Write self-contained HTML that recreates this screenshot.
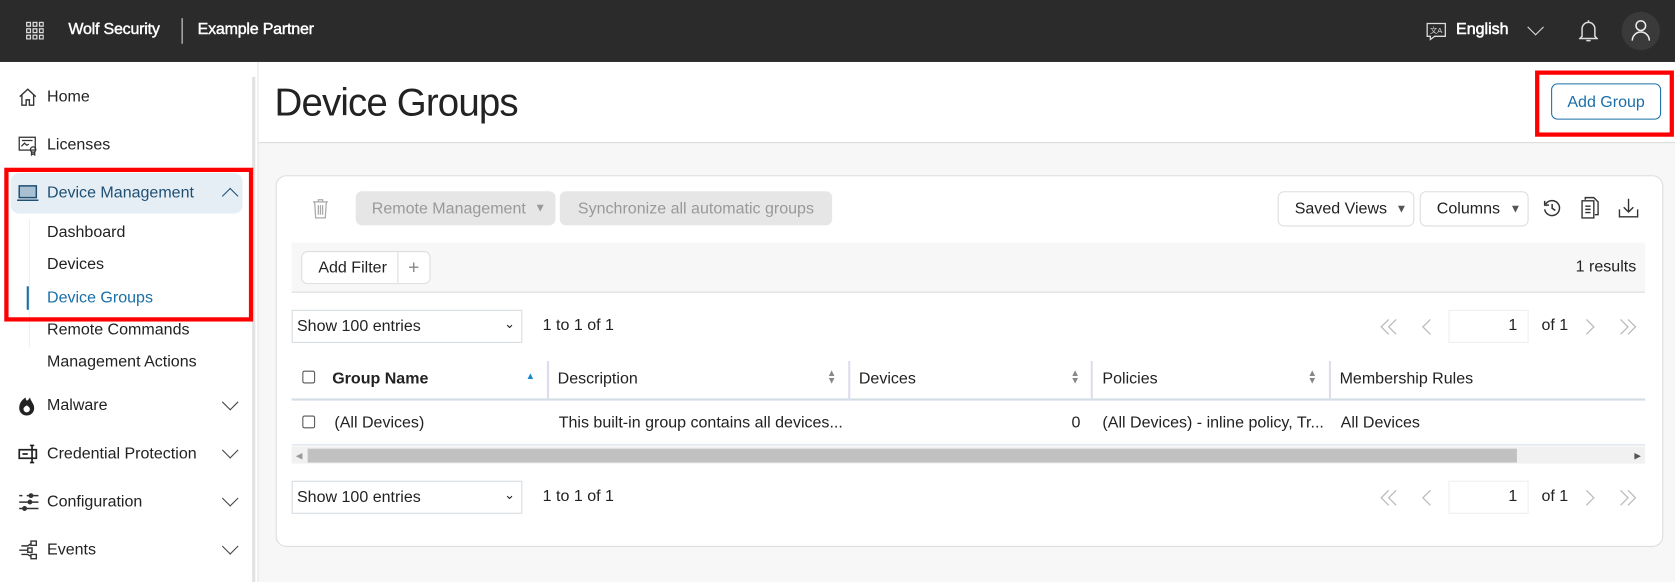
<!DOCTYPE html>
<html><head><meta charset="utf-8"><style>
*{box-sizing:border-box;margin:0;padding:0}
html,body{width:1675px;height:582px;overflow:hidden;background:#fff;font-family:"Liberation Sans",sans-serif;color:#222}
#w{position:absolute;left:0;top:0;width:1568px;height:545px;transform:scale(1.06824);transform-origin:0 0}
.a{position:absolute}
.t{position:absolute;font-size:15px;line-height:18px;white-space:nowrap}
.hdr{left:0;top:0;width:1568px;height:58px;background:#2b2b2b}
.nav{font-size:15px;color:#222}
.btn{position:absolute;border-radius:6px;font-size:15px;display:flex;align-items:center}
.chev{position:absolute;width:11px;height:11px;border-right:1.5px solid #444;border-bottom:1.5px solid #444;transform:rotate(45deg)}
.sel{position:absolute;height:31px;border:1px solid #d5dbe0;background:#fff;font-size:15px;padding:6px 4px}
</style></head><body><div id="w">
<div class="a hdr"></div>
<svg class="a" style="left:24px;top:20px" width="17" height="17" viewBox="0 0 17 17" fill="none" stroke="#ddd" stroke-width="1.2"><rect x="1" y="1" width="3.5" height="3.5"/><rect x="7" y="1" width="3.5" height="3.5"/><rect x="13" y="1" width="3.5" height="3.5"/><rect x="1" y="7" width="3.5" height="3.5"/><rect x="7" y="7" width="3.5" height="3.5"/><rect x="13" y="7" width="3.5" height="3.5"/><rect x="1" y="13" width="3.5" height="3.5"/><rect x="7" y="13" width="3.5" height="3.5"/><rect x="13" y="13" width="3.5" height="3.5"/></svg>
<div class="t" style="left:64px;top:19px;color:#fff;font-size:15px;letter-spacing:-0.2px;-webkit-text-stroke:0.4px #fff">Wolf Security</div>
<div class="a" style="left:170px;top:17px;width:1px;height:24px;background:#ddd"></div>
<div class="t" style="left:185px;top:19px;color:#fff;letter-spacing:-0.2px;-webkit-text-stroke:0.4px #fff">Example Partner</div>
<svg class="a" style="left:1335px;top:21px" width="19" height="18" viewBox="0 0 19 18" fill="none" stroke="#ddd" stroke-width="1.2"><path d="M1 1h17v12H8l-4 3v-3H1z"/><text x="3.5" y="10" font-size="7" fill="#ddd" stroke="none" font-family="Liberation Sans">文A</text></svg>
<div class="t" style="left:1363px;top:19px;color:#fff;font-size:15px;-webkit-text-stroke:0.5px #fff">English</div>
<div class="chev" style="left:1432px;top:20px;border-color:#ddd"></div>
<svg class="a" style="left:1478px;top:17px" width="18" height="24" viewBox="0 0 18 24" fill="none" stroke="#ddd" stroke-width="1.4"><path d="M9 2v2M3 17V10a6 6 0 0112 0v7l2 2H1z"/><path d="M7 21h4"/></svg>
<div class="a" style="left:1518px;top:11px;width:36px;height:36px;border-radius:50%;background:#3a3a3a"></div>
<svg class="a" style="left:1526px;top:18px" width="20" height="22" viewBox="0 0 20 22" fill="none" stroke="#eee" stroke-width="1.4"><circle cx="10" cy="6" r="4.5"/><path d="M2 20a8 8 0 0116 0"/></svg>

<!-- sidebar -->
<div class="a" style="left:236px;top:72px;width:3px;height:473px;background:#e2e2e2"></div>
<div class="a" style="left:241px;top:58px;width:1px;height:487px;background:#e5e5e5"></div>
<div class="a" style="left:10px;top:162px;width:217px;height:38px;background:#e5eef5;border-radius:8px"></div>
<div class="a" style="left:27px;top:205px;width:1px;height:120px;background:#eee"></div>
<div class="a" style="left:25px;top:268px;width:2px;height:22px;background:#1a6fa8"></div>
<svg class="a" style="left:17px;top:82px" width="18" height="18" viewBox="0 0 18 18" fill="none" stroke="#333" stroke-width="1.3"><path d="M1.5 8.5L9 1.5l7.5 7M3.5 7v9.5h4v-5h3v5h4V7"/></svg>
<svg class="a" style="left:17px;top:127px" width="19" height="19" viewBox="0 0 19 19" fill="none" stroke="#333" stroke-width="1.2"><rect x="1" y="1.5" width="15" height="12"/><path d="M3.5 4.5h10M3 10l3-3 2 2 2-1"/><circle cx="14" cy="13" r="2.5"/><path d="M12.5 15v3l1.5-1 1.5 1v-3"/></svg>
<svg class="a" style="left:15px;top:172px" width="22" height="18" viewBox="0 0 22 18" fill="none" stroke="#1f4f73" stroke-width="1.4"><rect x="3" y="2" width="16" height="11" fill="#a8c0d2"/><path d="M1 15.5h20"/></svg>
<svg class="a" style="left:17px;top:370px" width="16" height="20" viewBox="0 0 16 20"><path d="M8 19a7 7 0 007-7c0-4-3-6-4-10-1 2-2 3-3 3-1-1-1-2-1-3C4 4 1 7 1 12a7 7 0 007 7zm0-3a3 3 0 01-3-3c0-1.5 1.5-2.5 3-3.5 1.5 1 3 2 3 3.5a3 3 0 01-3 3z" fill="#222" fill-rule="evenodd"/></svg>
<svg class="a" style="left:17px;top:416px" width="20" height="18" viewBox="0 0 20 18" fill="none" stroke="#222" stroke-width="1.6"><rect x="1" y="5" width="16" height="8"/><path d="M4 9h5M13 1v16M11 1h4M11 17h4"/></svg>
<svg class="a" style="left:17px;top:461px" width="20" height="18" viewBox="0 0 20 18" fill="none" stroke="#333" stroke-width="1.4"><path d="M1 3h3M8 3h2M14 3h5M1 9h8M13 9h6M1 15h3M8 15h11"/><circle cx="12" cy="3" r="1.6" fill="#333"/><circle cx="11" cy="9" r="1.6" fill="#333"/><circle cx="6" cy="15" r="1.6" fill="#333"/></svg>
<svg class="a" style="left:17px;top:505px" width="20" height="20" viewBox="0 0 20 20" fill="none" stroke="#333" stroke-width="1.3"><rect x="12" y="1.5" width="5" height="4"/><rect x="12" y="14" width="5" height="4"/><rect x="9" y="8" width="4" height="4"/><path d="M1 10h8M3 6h6l3-2M3 14h6l3 2"/></svg>
<div class="t nav" style="left:44px;top:82px">Home</div>
<div class="t nav" style="left:44px;top:127px">Licenses</div>
<div class="t nav" style="left:44px;top:172px;color:#1f4f73">Device Management</div>
<div class="chev" style="left:210px;top:178px;transform:rotate(225deg);border-color:#1f4f73"></div>
<div class="t nav" style="left:44px;top:209px">Dashboard</div>
<div class="t nav" style="left:44px;top:239px">Devices</div>
<div class="t nav" style="left:44px;top:270px;color:#1a6fa8">Device Groups</div>
<div class="t nav" style="left:44px;top:300px">Remote Commands</div>
<div class="t nav" style="left:44px;top:330px">Management Actions</div>
<div class="t nav" style="left:44px;top:371px">Malware</div>
<div class="t nav" style="left:44px;top:416px">Credential Protection</div>
<div class="t nav" style="left:44px;top:461px">Configuration</div>
<div class="t nav" style="left:44px;top:506px">Events</div>
<div class="chev" style="left:210px;top:371px"></div>
<div class="chev" style="left:210px;top:416px"></div>
<div class="chev" style="left:210px;top:461px"></div>
<div class="chev" style="left:210px;top:506px"></div>
<div class="a" style="left:4px;top:157px;width:233px;height:144px;border:4px solid #f00"></div>

<!-- main -->
<div class="a" style="left:242px;top:133px;width:1326px;height:412px;background:#f7f7f7;border-top:1px solid #ddd"></div>
<div class="t" style="left:257px;top:74px;font-size:36px;line-height:44px;letter-spacing:-0.8px;color:#222">Device Groups</div>
<div class="btn" style="left:1452px;top:78px;width:103px;height:34px;border:1px solid #1a6fa8;color:#1a6fa8;justify-content:center">Add Group</div>
<div class="a" style="left:1437px;top:66px;width:130px;height:62px;border:4px solid #f00"></div>

<div class="a" style="left:258px;top:164px;width:1299px;height:348px;background:#fff;border:1px solid #ddd;border-radius:10px"></div>
<svg class="a" style="left:292px;top:185px" width="16" height="20" viewBox="0 0 16 20" fill="none" stroke="#aaa" stroke-width="1.2"><path d="M1 4h14M6 4V2h4v2M2.5 4l1 15h9l1-15M6 7v9M8 7v9M10 7v9"/></svg>
<div class="btn" style="left:333px;top:179px;width:187px;height:32px;background:#e6e6e6;color:#999;padding-left:15px">Remote Management<span style="margin-left:8px;font-size:11px">▼</span></div>
<div class="btn" style="left:524px;top:179px;width:255px;height:32px;background:#e6e6e6;color:#999;justify-content:center">Synchronize all automatic groups</div>
<div class="btn" style="left:1196px;top:179px;width:128px;height:33px;border:1px solid #ddd;color:#222;padding-left:15px">Saved Views<span style="margin-left:8px;font-size:11px;color:#555">▼</span></div>
<div class="btn" style="left:1329px;top:179px;width:102px;height:33px;border:1px solid #ddd;color:#222;padding-left:15px">Columns<span style="margin-left:9px;font-size:11px;color:#555">▼</span></div>
<svg class="a" style="left:1444px;top:186px" width="18" height="18" viewBox="0 0 18 18" fill="none" stroke="#333" stroke-width="1.4"><path d="M3 5a7 7 0 11-1 5M2 2v4h4M9 5v4l3 2"/></svg>
<svg class="a" style="left:1480px;top:184px" width="17" height="21" viewBox="0 0 17 21" fill="none" stroke="#333" stroke-width="1.3"><path d="M4 3V1h8l4 4v12h-3M1 4h11v16H1zM4 9h5M4 12h5M4 15h5"/></svg>
<svg class="a" style="left:1515px;top:185px" width="19" height="19" viewBox="0 0 19 19" fill="none" stroke="#333" stroke-width="1.3"><path d="M9.5 1v12M5 9l4.5 4.5L14 9M1 11v7h17v-7"/></svg>

<div class="a" style="left:273px;top:227px;width:1267px;height:47px;background:#f7f7f7;border-bottom:1px solid #ddd"></div>
<div class="btn" style="left:282px;top:235px;width:121px;height:31px;border:1px solid #ddd;background:#fff"><span style="margin-left:15px">Add Filter</span><span style="position:absolute;left:89px;top:0;width:1px;height:29px;background:#ddd"></span><span style="position:absolute;left:99px;color:#888;font-size:18px">+</span></div>
<div class="t" style="left:1475px;top:241px">1 results</div>

<div class="sel" style="left:273px;top:290px;width:216px">Show 100 entries<span style="position:absolute;right:6px;top:5px;font-size:12px">&#8964;</span></div>
<div class="t" style="left:508px;top:296px">1 to 1 of 1</div>
<svg class="a" style="left:1290px;top:296px" width="250" height="20" viewBox="0 0 250 20" fill="none" stroke="#bbb" stroke-width="1.2"><path d="M10 3l-7 7 7 7M17 3l-7 7 7 7M49 3l-7 7 7 7M195 3l7 7-7 7M227 3l7 7-7 7M234 3l7 7-7 7"/></svg>
<div class="a" style="left:1356px;top:290px;width:75px;height:31px;border:1px solid #eee"></div>
<div class="t" style="left:1412px;top:296px">1</div>
<div class="t" style="left:1443px;top:296px">of 1</div>

<div class="a" style="left:273px;top:373px;width:1267px;height:2px;background:#d3dde5"></div>
<div class="a" style="left:512px;top:338px;width:2px;height:36px;background:#dde"></div>
<div class="a" style="left:794px;top:338px;width:2px;height:36px;background:#dde"></div>
<div class="a" style="left:1021px;top:338px;width:2px;height:36px;background:#dde"></div>
<div class="a" style="left:1244px;top:338px;width:2px;height:36px;background:#dde"></div>
<div class="a" style="left:283px;top:347px;width:12px;height:12px;border:1px solid #555;border-radius:2px"></div>
<div class="t" style="left:311px;top:346px;font-weight:bold">Group Name</div>
<div class="t" style="left:492px;top:343px;font-size:9px;color:#1a8ad0">▲</div>
<div class="t" style="left:522px;top:346px">Description</div>
<div class="t" style="left:804px;top:346px">Devices</div>
<div class="t" style="left:1032px;top:346px">Policies</div>
<div class="t" style="left:1254px;top:346px">Membership Rules</div>
<div class="t" style="left:774px;top:346px;font-size:9px;line-height:7px;color:#888">▲<br>▼</div>
<div class="t" style="left:1002px;top:346px;font-size:9px;line-height:7px;color:#888">▲<br>▼</div>
<div class="t" style="left:1224px;top:346px;font-size:9px;line-height:7px;color:#888">▲<br>▼</div>
<div class="a" style="left:283px;top:389px;width:12px;height:12px;border:1px solid #555;border-radius:2px"></div>
<div class="t" style="left:313px;top:387px">(All Devices)</div>
<div class="t" style="left:523px;top:387px">This built-in group contains all devices...</div>
<div class="t" style="left:1003px;top:387px">0</div>
<div class="t" style="left:1032px;top:387px">(All Devices) - inline policy, Tr...</div>
<div class="t" style="left:1255px;top:387px">All Devices</div>
<div class="a" style="left:273px;top:416px;width:1267px;height:1px;background:#d3dde5"></div>
<div class="a" style="left:273px;top:418px;width:1267px;height:16px;background:#f1f1f1"></div>
<div class="a" style="left:288px;top:420px;width:1132px;height:13px;background:#c1c1c1"></div>
<div class="t" style="left:277px;top:418px;font-size:8px;color:#999">◀</div>
<div class="t" style="left:1530px;top:418px;font-size:8px;color:#555">▶</div>

<div class="sel" style="left:273px;top:450px;width:216px">Show 100 entries<span style="position:absolute;right:6px;top:5px;font-size:12px">&#8964;</span></div>
<div class="t" style="left:508px;top:456px">1 to 1 of 1</div>
<svg class="a" style="left:1290px;top:456px" width="250" height="20" viewBox="0 0 250 20" fill="none" stroke="#bbb" stroke-width="1.2"><path d="M10 3l-7 7 7 7M17 3l-7 7 7 7M49 3l-7 7 7 7M195 3l7 7-7 7M227 3l7 7-7 7M234 3l7 7-7 7"/></svg>
<div class="a" style="left:1356px;top:450px;width:75px;height:31px;border:1px solid #eee"></div>
<div class="t" style="left:1412px;top:456px">1</div>
<div class="t" style="left:1443px;top:456px">of 1</div>
</div></body></html>
